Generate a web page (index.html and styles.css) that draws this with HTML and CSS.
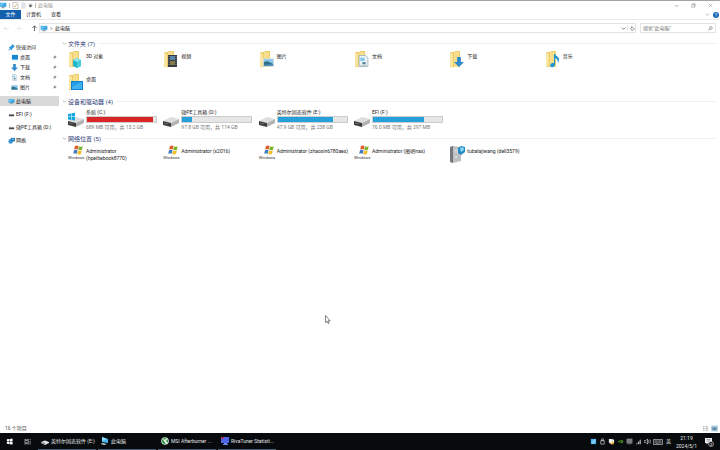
FILE: index.html
```
<!DOCTYPE html>
<html lang="zh-CN">
<head>
    <meta charset="UTF-8">
    <meta name="viewport" content="width=device-width, initial-scale=1.0">
    <title>此电脑</title>
    <link rel="stylesheet" href="styles.css">
</head>
<body>
    <!-- Shared icons -->
    <svg class="sprite" aria-hidden="true">
        <symbol id="folder" viewBox="0 0 18 20">
            <path d="M1 2h4l1-1h5v16H1z" fill="#eccb69"/>
            <path d="M5 2h5v15H5z" fill="#f6de8c"/>
            <path d="M1 2l3 2v14l-3-2z" fill="#f8e5a0"/>
        </symbol>
        <symbol id="monitor" viewBox="0 0 12 10">
            <path d="M1 1h10v6H1z" fill="#2f9fe0"/>
            <path d="M2 2h8L2 6z" fill="#74cbf5"/>
            <path d="M5 7h2v1h2v1H3V8h2z" fill="#6c8ea5"/>
        </symbol>
        <symbol id="drive" viewBox="0 0 18 16">
            <path d="M0 9l8-4 8 2-8 4z" fill="#dedede"/>
            <path d="M0 9l8 2v4l-8-2z" fill="#3c3c3c"/>
            <path d="M8 11l8-4v4l-8 4z" fill="#b2b2b2"/>
            <path d="M1 11l4 1" stroke="#888" stroke-width=".6"/>
        </symbol>
        <symbol id="small-drive" viewBox="0 0 8 8">
            <path d="M2 3h4l1 2H1z" fill="#d8d8d8"/>
            <path d="M1 4h6v2H1z" fill="#484848"/>
        </symbol>
        <symbol id="arrow-down" viewBox="0 0 8 8">
            <path d="M2.500 0h3v4H8L4 8 0 4h2.500z" fill="#2f8acb"/>
        </symbol>
        <symbol id="picture" viewBox="0 0 12 9">
            <path d="M0 0h12v9H0z" fill="#d5dde3"/>
            <path d="M1 1h10v7H1z" fill="#85c4ef"/>
            <path d="M1 4l4-1 6 3v2H1z" fill="#2f6e83"/>
            <path d="M1 7l10-1v2H1z" fill="#4b92bd"/>
        </symbol>
        <symbol id="page" viewBox="0 0 10 12">
            <path d="M1 1h6l2 2v8H1z" fill="#edf2f5" stroke="#9aaeb9" stroke-width=".7"/>
            <path d="M2 3h4v3H2z" fill="#83cceb"/>
            <path d="M4 7h3v2H4z" fill="#5185a2"/>
            <path d="M2 10h6" stroke="#aab8c0" stroke-width=".6"/>
        </symbol>
        <symbol id="pin" viewBox="0 0 6 6">
            <path d="M3 1l2 2-1 .3-1 1-.3.7-1.8-1.8.8-.3 1-1zM1.800 4.200L.6 5.400" fill="#777" stroke="#777" stroke-width=".5"/>
        </symbol>
        <symbol id="chevron" viewBox="0 0 6 6">
            <path d="M1 2l2 2 2-2" fill="none" stroke="currentColor" stroke-width=".7"/>
        </symbol>
        <symbol id="win-flag" viewBox="0 0 10 10">
            <path d="M2 1q2-1 3.500 0L4.700 4.500q-1.500-1-3.500 0z" fill="#e05a2d"/>
            <path d="M6 1.200q1.700 1 3.700 0L9 4.700q-2 1-3.800 0z" fill="#80b32d"/>
            <path d="M1 5.200q2-1 3.500 0L3.700 8.700q-1.700-1-3.500 0z" fill="#3f79c4"/>
            <path d="M5 5.400q1.800 1 3.800 0L8 9q-2 1-3.800 0z" fill="#f1be2f"/>
        </symbol>
    </svg>

    <div class="explorer">
        <header class="title-bar">
            <svg class="icon-title" viewBox="0 0 12 10"><use href="#monitor"/></svg>
            <span class="divider"></span>
            <button class="plain-button" aria-label="属性"><svg class="icon-small" viewBox="0 0 8 8"><path d="M1 .5h5l1 1v6H1z" fill="#fff" stroke="#999" stroke-width=".6"/><path d="M2.500 4.500l1 1 2-3" fill="none" stroke="#c9914f" stroke-width=".9"/></svg></button>
            <button class="plain-button" aria-label="新建文件夹"><svg class="icon-small" viewBox="0 0 8 8"><path d="M2 1h4v6H2z" fill="#e4e8ee" stroke="#ccd2da" stroke-width=".5"/></svg></button>
            <button class="plain-button" aria-label="自定义"><svg class="icon-tiny" viewBox="0 0 6 6"><path d="M1 1.500h4M1 3h4L3 5z" fill="#444" stroke="#444" stroke-width=".5"/></svg></button>
            <span class="divider"></span>
            <h1 class="window-title">此电脑</h1>
            <div class="window-buttons">
                <button class="plain-button" aria-label="最小化"><svg class="icon-small" viewBox="0 0 8 8"><path d="M2 4.500h4" stroke="#888" stroke-width=".7"/></svg></button>
                <button class="plain-button" aria-label="还原"><svg class="icon-small" viewBox="0 0 8 8"><path d="M2 3h3v3H2zM3 3V2h3v3H5" fill="none" stroke="#888" stroke-width=".6"/></svg></button>
                <button class="plain-button" aria-label="关闭"><svg class="icon-small" viewBox="0 0 8 8"><path d="M2 2l4 4M6 2L2 6" stroke="#888" stroke-width=".6"/></svg></button>
            </div>
        </header>

        <nav class="ribbon">
            <button class="tab tab-file">文件</button>
            <button class="tab">计算机</button>
            <button class="tab">查看</button>
            <div class="ribbon-right">
                <svg class="icon-tiny" viewBox="0 0 6 6"><use href="#chevron"/></svg>
                <button class="help-button">?</button>
            </div>
        </nav>

        <div class="address-row">
            <div class="nav-buttons">
                <button class="plain-button" aria-label="后退" disabled><svg class="icon-small" viewBox="0 0 8 8"><path d="M7 4H1M4 1.500L1.500 4 4 6.500" fill="none" stroke="#ddd" stroke-width=".7"/></svg></button>
                <button class="plain-button" aria-label="前进" disabled><svg class="icon-small" viewBox="0 0 8 8"><path d="M1 4h6M4 1.500L6.500 4 4 6.500" fill="none" stroke="#ddd" stroke-width=".7"/></svg></button>
                <button class="plain-button up-button" aria-label="向上"><svg class="icon-small" viewBox="0 0 8 8"><path d="M4 7V1M1.500 3.500L4 1l2.500 2.500" fill="none" stroke="#444" stroke-width=".9"/></svg></button>
            </div>
            <div class="address-box">
                <svg class="icon-address" viewBox="0 0 12 10"><use href="#monitor"/></svg>
                <svg class="icon-tiny" viewBox="0 0 6 6"><path d="M2 1.500L3.500 3 2 4.500" fill="none" stroke="#444" stroke-width=".8"/></svg>
                <a class="crumb" href="#">此电脑</a>
                <button class="plain-button" aria-label="历史"><svg class="icon-tiny" viewBox="0 0 6 6"><use href="#chevron"/></svg></button>
                <button class="plain-button refresh" aria-label="刷新"><svg class="icon-tiny" viewBox="0 0 6 6"><path d="M4.500 2A2 2 0 1 1 2 1.500M2 .3v1.500h1.500" fill="none" stroke="#555" stroke-width=".7"/></svg></button>
            </div>
            <div class="search-box">
                <input class="search-input" type="text" aria-label="搜索" placeholder='搜索"此电脑"'>
                <svg class="icon-tiny" viewBox="0 0 6 6"><circle cx="3.500" cy="2.300" r="1.600" fill="none" stroke="#555" stroke-width=".6"/><path d="M2.400 3.500L.6 5.400" stroke="#555" stroke-width=".7"/></svg>
            </div>
        </div>

        <div class="content">
            <!-- Navigation pane -->
            <aside class="sidebar">
                <a class="side-item side-root" href="#"><svg class="icon-small" viewBox="0 0 8 8"><path d="M5 0l3 3-2 1-2 3-1-1-3 2 2-3-1-1 3-2z" fill="#2f95dc"/></svg>快速访问</a>
                <a class="side-item side-child" href="#"><svg class="icon-small" viewBox="0 0 8 8"><path d="M1 1h7v5H1z" fill="#1787d0"/><path d="M1 6h7v1H1z" fill="#46b6ef"/></svg>桌面<svg class="pin" viewBox="0 0 6 6"><use href="#pin"/></svg></a>
                <a class="side-item side-child" href="#"><svg class="icon-small" viewBox="0 0 8 8"><use href="#arrow-down"/></svg>下载<svg class="pin" viewBox="0 0 6 6"><use href="#pin"/></svg></a>
                <a class="side-item side-child" href="#"><svg class="icon-small" viewBox="0 0 10 12"><use href="#page"/></svg>文档<svg class="pin" viewBox="0 0 6 6"><use href="#pin"/></svg></a>
                <a class="side-item side-child" href="#"><svg class="icon-small" viewBox="0 0 12 9"><use href="#picture"/></svg>图片<svg class="pin" viewBox="0 0 6 6"><use href="#pin"/></svg></a>
                <a class="side-item side-top selected" href="#"><svg class="icon-small" viewBox="0 0 12 10"><use href="#monitor"/></svg>此电脑</a>
                <a class="side-item side-top" href="#"><svg class="icon-small" viewBox="0 0 8 8"><use href="#small-drive"/></svg>EFI (F:)</a>
                <a class="side-item side-top" href="#"><svg class="icon-small" viewBox="0 0 8 8"><use href="#small-drive"/></svg>微PE工具箱 (D:)</a>
                <a class="side-item side-top" href="#"><svg class="icon-small" viewBox="0 0 8 8"><circle cx="3" cy="5" r="2.600" fill="#3f9bd8"/><path d="M3 1h5v4H3z" fill="#2678b8"/><path d="M4 2h3v1H4z" fill="#7cd0f5"/></svg>网络</a>
            </aside>

            <main class="main">
                <section class="group">
                    <h2 class="group-title"><svg class="icon-tiny" viewBox="0 0 6 6"><use href="#chevron"/></svg>文件夹 (7)</h2>
                    <div class="grid">
                        <a class="item" href="#"><svg class="item-icon" viewBox="0 0 18 20"><use href="#folder"/><path d="M5 10l4-2 4 2v6l-4 2-4-2z" fill="#1cb5cd"/><path d="M5 10l4-2 4 2-4 2z" fill="#91e5ee"/><path d="M9 12l4-2v6l-4 2z" fill="#45cdde"/></svg><span class="item-name">3D 对象</span></a>
                        <a class="item" href="#"><svg class="item-icon" viewBox="0 0 18 20"><use href="#folder"/><path d="M5 5h9v12H5z" fill="#333c43"/><path d="M7 6h5v4H7z" fill="#5583a9"/><path d="M7 11h5v4H7z" fill="#867e45"/><path d="M6 6v10M13 6v10" stroke="#999" stroke-width=".7" stroke-dasharray="1 1"/></svg><span class="item-name">视频</span></a>
                        <a class="item" href="#"><svg class="item-icon" viewBox="0 0 18 20"><use href="#folder"/><use href="#picture" x="4" y="8" width="11" height="9"/></svg><span class="item-name">图片</span></a>
                        <a class="item" href="#"><svg class="item-icon" viewBox="0 0 18 20"><use href="#folder"/><use href="#page" x="4" y="4" width="11" height="14"/></svg><span class="item-name">文档</span></a>
                        <a class="item" href="#"><svg class="item-icon" viewBox="0 0 18 20"><use href="#folder"/><use href="#arrow-down" x="5" y="7" width="10" height="10"/></svg><span class="item-name">下载</span></a>
                        <a class="item" href="#"><svg class="item-icon" viewBox="0 0 18 20"><use href="#folder"/><path d="M9 4h1q1 2 3 3 2 3 0 6 0-4-3-5v7q-1 3-4 2-2-2 1-4h2z" fill="#1d97d1"/></svg><span class="item-name">音乐</span></a>
                        <a class="item" href="#"><svg class="item-icon" viewBox="0 0 18 20"><use href="#folder"/><path d="M3 8h12v9H3z" fill="#1381cd"/><path d="M4 9h10v7H4z" fill="#269de8"/><path d="M4 14l10-5v7H4z" fill="#40b2f2"/></svg><span class="item-name">桌面</span></a>
                    </div>
                </section>

                <section class="group">
                    <h2 class="group-title"><svg class="icon-tiny" viewBox="0 0 6 6"><use href="#chevron"/></svg>设备和驱动器 (4)</h2>
                    <div class="grid">
                        <a class="item" href="#"><svg class="item-icon drive-icon" viewBox="0 0 18 16"><use href="#drive"/><path d="M0 2l3-.6v3H0zM3.500 1.300L7 .8v3.600H3.500zM0 5h3v3l-3-.6zM3.500 5H7v3.600L3.500 8z" fill="#12a9e0"/></svg><span class="drive-info"><span class="item-name">系统 (C:)</span><span class="meter"><span class="meter-fill full" style="width: 95%"></span></span><span class="item-note">689 MB 可用，共 13.2 GB</span></span></a>
                        <a class="item" href="#"><svg class="item-icon drive-icon" viewBox="0 0 18 16"><use href="#drive"/></svg><span class="drive-info"><span class="item-name">微PE工具箱 (D:)</span><span class="meter"><span class="meter-fill" style="width: 14%"></span></span><span class="item-note">97.8 GB 可用，共 114 GB</span></span></a>
                        <a class="item" href="#"><svg class="item-icon drive-icon" viewBox="0 0 18 16"><use href="#drive"/></svg><span class="drive-info"><span class="item-name">英特尔固态软件 (E:)</span><span class="meter"><span class="meter-fill" style="width: 80%"></span></span><span class="item-note">47.9 GB 可用，共 238 GB</span></span></a>
                        <a class="item" href="#"><svg class="item-icon drive-icon" viewBox="0 0 18 16"><use href="#drive"/></svg><span class="drive-info"><span class="item-name">EFI (F:)</span><span class="meter"><span class="meter-fill" style="width: 74%"></span></span><span class="item-note">76.0 MB 可用，共 297 MB</span></span></a>
                    </div>
                </section>

                <section class="group">
                    <h2 class="group-title"><svg class="icon-tiny" viewBox="0 0 6 6"><use href="#chevron"/></svg>网络位置 (5)</h2>
                    <div class="grid">
                        <a class="item" href="#"><span class="net-icon"><svg class="icon-flag" viewBox="0 0 10 10"><use href="#win-flag"/></svg><span class="net-logo">Windows</span></span><span class="item-name">Administrator<br>(hpelitebook8770)</span></a>
                        <a class="item" href="#"><span class="net-icon"><svg class="icon-flag" viewBox="0 0 10 10"><use href="#win-flag"/></svg><span class="net-logo">Windows</span></span><span class="item-name">Administrator (x2016)</span></a>
                        <a class="item" href="#"><span class="net-icon"><svg class="icon-flag" viewBox="0 0 10 10"><use href="#win-flag"/></svg><span class="net-logo">Windows</span></span><span class="item-name">Administrator (zhaoxin6780aes)</span></a>
                        <a class="item" href="#"><span class="net-icon"><svg class="icon-flag" viewBox="0 0 10 10"><use href="#win-flag"/></svg><span class="net-logo">Windows</span></span><span class="item-name">Administrator (图吧nas)</span></a>
                        <a class="item" href="#"><svg class="item-icon" viewBox="0 0 18 20"><path d="M1 2l3-1 8 1v14l-8 2-3-1z" fill="#bcc0c2"/><path d="M1 2l3-1v17l-3-1z" fill="#74797c"/><path d="M5 5h5M5 7h5" stroke="#dfe2e3" stroke-width=".8"/><circle cx="7" cy="12" r="1" fill="#e9eeee"/><path d="M9 3l3-2 4 1v5l-4 3-3-2z" fill="#268bc4"/><path d="M11 3l3-1 1 3-3 2z" fill="#8cd6f2"/></svg><span class="item-name">tubalajiwang (dell3579)</span></a>
                    </div>
                </section>
            </main>
        </div>

        <footer class="status-bar">
            <span>16 个项目</span>
            <div class="view-buttons">
                <button class="plain-button" aria-label="详细信息"><svg class="icon-small" viewBox="0 0 8 8"><path d="M1 2h2M4 2h3M1 4h2M4 4h3M1 6h2M4 6h3" stroke="#999" stroke-width=".9"/></svg></button>
                <button class="plain-button view-active" aria-label="大图标"><svg class="icon-small" viewBox="0 0 8 8"><path d="M1 2h6v4H1z" fill="#8db9d3" stroke="#6f8794" stroke-width=".5"/><path d="M2 5l2-2 2 2z" fill="#2c6377"/></svg></button>
            </div>
        </footer>
    </div>

    <div class="taskbar">
        <button class="task-button" aria-label="开始"><svg class="icon-small" viewBox="0 0 8 8"><path d="M1 1.500L3.700 1v2.700H1zM4.200 1L7.500.5v3.200H4.200zM1 4.200h2.700V7L1 6.500zM4.200 4.200h3.300v3.300L4.200 7z" fill="#fff"/></svg></button>
        <button class="task-button" aria-label="任务视图"><svg class="icon-small" viewBox="0 0 8 8"><path d="M1 1v1h4V1M1 3h4v2.500H1zM1 7.500v-1h4v1M7 1v1.500M7 3.500v4" fill="none" stroke="#ddd" stroke-width=".7"/></svg></button>
        <button class="task-item"><svg class="icon-task" viewBox="0 0 8 8"><path d="M0 5l4-1.500L8 5v1L4 8 0 6z" fill="#e4e4e4"/><path d="M0 5l4 1v2L0 6z" fill="#888"/></svg>英特尔固态软件 (E:)</button>
        <button class="task-item"><svg class="icon-task" viewBox="0 0 8 8"><path d="M1 0l6 2v4L1 5z" fill="#45b3ef"/><path d="M1 0l5 2-5 2z" fill="#94dbfa"/><path d="M1 6l5 1-3 1-3-1z" fill="#c9dce6"/></svg>此电脑</button>
        <button class="task-item"><svg class="icon-task" viewBox="0 0 8 8"><circle cx="4" cy="4" r="3.800" fill="#d9eedb"/><circle cx="4" cy="4" r="3" fill="#339447"/><path d="M1 1l6 5-2 1zM3 3l4-2-2 3z" fill="#f2faf2"/></svg>MSI Afterburner ...</button>
        <button class="task-item"><svg class="icon-task" viewBox="0 0 8 8"><path d="M0 0h8v6H0z" fill="#4e66e4"/><path d="M0 0h3v2H0z" fill="#a33d75"/><path d="M3 6h3v1h1v1H2V7h1z" fill="#748ae9"/></svg>RivaTuner Statisti...</button>
        <div class="tray">
            <svg class="icon-tray" viewBox="0 0 8 8"><path d="M1 1h6v6H1z" fill="#49b4ef"/><path d="M2 5l4-3M3 6l3-2" stroke="#d4f0ff" stroke-width=".8"/></svg>
            <svg class="icon-tray" viewBox="0 0 8 8"><path d="M3 1h2v2H3zM2 3h4v4H2z" fill="none" stroke="#ddd" stroke-width=".7"/></svg>
            <svg class="icon-tray" viewBox="0 0 8 8"><path d="M1 1l3 0 3 1v3L4 7 1 5z" fill="#eee"/><path d="M5 3l2 4H3z" fill="#f5bd2e"/></svg>
            <svg class="icon-tray" viewBox="0 0 8 8"><path d="M1 4q3-3 6-1v2q-3 2-6-1z" fill="#4c921f"/><circle cx="4" cy="4" r="1" fill="#111"/></svg>
            <svg class="icon-tray" viewBox="0 0 8 8"><path d="M1 1h6v5H1zM3 7h2" fill="#777" stroke="#999" stroke-width=".6"/></svg>
            <svg class="icon-tray" viewBox="0 0 8 8"><path d="M1 7l6-6v6z" fill="#555"/><path d="M2 6v1M4 4v3M6 2v5" stroke="#ccc" stroke-width=".8"/></svg>
            <svg class="icon-tray" viewBox="0 0 8 8"><path d="M0 3h2l2-2v6L2 5H0zM5 2.500q1 1.500 0 3M6.500 1.500q2 2.500 0 5" fill="none" stroke="#ddd" stroke-width=".7"/></svg>
            <svg class="icon-keyboard" viewBox="0 0 10 8"><path d="M.5 1.500h9v5h-9z" fill="#333" stroke="#ccc" stroke-width=".6"/><path d="M2 3h6M2 4.200h6M3 5.400h4" stroke="#bbb" stroke-width=".6" stroke-dasharray=".8 .5"/></svg>
            <span class="ime">英</span>
            <div class="clock"><span>21:19</span><span>2024/5/1</span></div>
            <svg class="icon-notice" viewBox="0 0 10 10"><path d="M1 1h7v5H4L2.500 7.500V6H1z" fill="#eee"/><path d="M2.500 2.500h4M2.500 4h4" stroke="#555" stroke-width=".5"/><circle cx="7" cy="7" r="2.600" fill="#222" stroke="#ddd" stroke-width=".5"/><text x="6" y="8.500" class="notice-count">2</text></svg>
        </div>
    </div>

    <svg class="pointer" viewBox="0 0 6 9" aria-hidden="true"><path d="M.5.5v7L2 6.200l1 2.300 1-.4-1-2.300h2.200z" fill="#fff" stroke="#333" stroke-width=".6"/></svg>
</body>
</html>
```
FILE: styles.css
```
* {
    box-sizing: border-box;
}
body {
    margin: 0;
    height: 100vh;
    display: flex;
    flex-direction: column;
    overflow: hidden;
    background-color: #fff;
    color: #222;
    font-family: Roboto, "Noto Sans CJK SC", sans-serif;
    font-size: 5px;
    line-height: 7px;
}
a {
    color: inherit;
    text-decoration: none;
}
button, input {
    font: inherit;
    color: inherit;
    border: none;
    background: none;
    padding: 0;
    margin: 0;
}
svg {
    display: block;
    flex-shrink: 0;
}
.sprite {
    position: absolute;
    width: 0;
    height: 0;
}

/* icon sizes */
.icon-tiny {
    width: 5px;
    height: 5px;
}
.icon-small {
    width: 7px;
    height: 7px;
}
.icon-title, .icon-address {
    width: 8px;
    height: 7px;
}

.explorer {
    flex: 1;
    min-height: 0;
    display: flex;
    flex-direction: column;
    border-top: 1px solid #a5a3a6;
}

/* title bar */
.title-bar {
    display: flex;
    align-items: center;
    gap: 1px;
    height: 9px;
    color: #999;
}
.title-bar .icon-title {
    margin-left: -1px;
}
.divider {
    width: 1px;
    height: 5px;
    margin: 0 1px;
    background-color: #bbb;
}
.window-title {
    margin: 0;
    font-size: 5px;
    font-weight: normal;
}
.window-buttons {
    display: flex;
    gap: 10px;
    margin-left: auto;
    padding-right: 6px;
}

/* ribbon */
.ribbon {
    display: flex;
    height: 10px;
    border-bottom: 1px solid #e9e9e9;
}
.tab {
    padding: 0 5px;
    white-space: nowrap;
}
.tab-file {
    width: 21px;
    padding: 0;
    background-color: #1160ae;
    color: #fff;
}
.ribbon-right {
    display: flex;
    align-items: center;
    gap: 3px;
    margin-left: auto;
    padding-right: 1px;
    color: #888;
}
.help-button {
    width: 6px;
    height: 6px;
    border-radius: 50%;
    background-color: #1769b3;
    color: #fff;
    line-height: 6px;
}

/* address and search */
.address-row {
    display: flex;
    align-items: center;
    height: 16px;
    padding-right: 4px;
}
.nav-buttons {
    display: flex;
    gap: 5px;
    width: 39px;
    padding-left: 3px;
}
.up-button {
    margin-left: auto;
    padding-right: 1px;
}
.address-box, .search-box {
    display: flex;
    align-items: center;
    height: 10px;
    border: 1px solid #e4e4e4;
}
.address-box {
    flex: 1;
    gap: 1px;
}
.crumb {
    flex: 1;
}
.refresh {
    width: 8px;
    padding-left: 2px;
    border-left: 1px solid #e4e4e4;
}
.search-box {
    width: 76px;
    margin-left: 4px;
    padding: 0 2px;
}
.search-input {
    flex: 1;
    min-width: 0;
    height: 8px;
}
.search-input::placeholder {
    color: #777;
}

.content {
    flex: 1;
    min-height: 0;
    display: flex;
}

/* navigation pane */
.sidebar {
    width: 59px;
    padding-top: 6px;
}
.side-item {
    display: flex;
    align-items: center;
    gap: 1px;
    height: 10px;
    white-space: nowrap;
}
.side-root {
    padding-left: 8px;
}
.side-child {
    gap: 2px;
    padding: 0 2px 0 11px;
}
.side-top {
    margin-top: 3px;
    padding-left: 8px;
}
.side-top.selected {
    margin-top: 4px;
    background-color: #d9d9d9;
}
.pin {
    width: 4px;
    height: 4px;
    margin-left: auto;
}

/* main pane */
.main {
    flex: 1;
    padding: 3px 4px 0 3px;
}
.group {
    margin-bottom: 4px;
}
.group-title {
    display: flex;
    align-items: center;
    gap: 1px;
    margin: 0 0 2px;
    color: #2c3a75;
    font-size: 6px;
    font-weight: normal;
    line-height: 9px;
}
.group-title::after {
    content: "";
    flex: 1;
    height: 1px;
    margin-left: 3px;
    background-color: #f0f0f0;
}
.group-title .icon-tiny {
    color: #888;
}
.grid {
    display: grid;
    grid-template-columns: repeat(auto-fill, minmax(90px, 1fr));
    row-gap: 3px;
    padding: 0 76px 0 6px;
}
.item {
    display: flex;
    min-height: 20px;
}
.item-icon {
    flex-shrink: 0;
    width: 18px;
    height: 20px;
}
.item-name {
    padding-top: 3px;
    white-space: nowrap;
}
.drive-icon {
    height: 16px;
    margin-top: 4px;
}
.drive-info {
    display: flex;
    flex-direction: column;
    width: 71px;
}
.drive-info .item-name {
    padding-top: 1px;
}
.meter {
    height: 7px;
    margin-bottom: 1px;
    border: 1px solid #ccc;
    background-color: #e6e6e6;
}
.meter-fill {
    display: block;
    height: 100%;
    background-color: #26a0da;
}
.meter-fill.full {
    background-color: #da2626;
}
.item-note {
    color: #777;
    line-height: 6px;
    white-space: nowrap;
}
.net-icon {
    width: 18px;
}
.icon-flag {
    width: 10px;
    height: 10px;
    margin-left: 5px;
}
.net-logo {
    display: block;
    color: #333;
    font-size: 4px;
    line-height: 5px;
}

/* status bar */
.status-bar {
    display: flex;
    align-items: center;
    justify-content: space-between;
    height: 10px;
    padding: 0 2px 0 5px;
    color: #555;
}
.view-buttons {
    display: flex;
    gap: 2px;
}
.view-active {
    background-color: #dceefa;
}

/* taskbar */
.taskbar {
    display: flex;
    align-items: stretch;
    height: 17px;
    background-color: #070b0e;
    color: #e6e6e6;
}
.task-button {
    display: flex;
    align-items: center;
    justify-content: center;
    width: 18px;
}
.task-item {
    display: flex;
    align-items: center;
    gap: 2px;
    width: 58px;
    margin-left: 2px;
    padding-left: 3px;
    border-bottom: 1px solid #4b6078;
    white-space: nowrap;
}
.icon-task {
    width: 8px;
    height: 8px;
}
.tray {
    display: flex;
    align-items: center;
    gap: 2px;
    margin-left: auto;
    padding-right: 6px;
}
.icon-tray {
    width: 7px;
    height: 7px;
}
.icon-keyboard {
    width: 10px;
    height: 8px;
}
.ime {
    padding: 0 3px 0 1px;
}
.clock {
    display: flex;
    flex-direction: column;
    align-items: center;
    line-height: 8px;
}
.icon-notice {
    width: 10px;
    height: 10px;
    margin-left: 5px;
}
.notice-count {
    font-size: 4px;
    fill: #fff;
}

.pointer {
    position: absolute;
    left: 325px;
    top: 315px;
    width: 6px;
    height: 9px;
}
```
